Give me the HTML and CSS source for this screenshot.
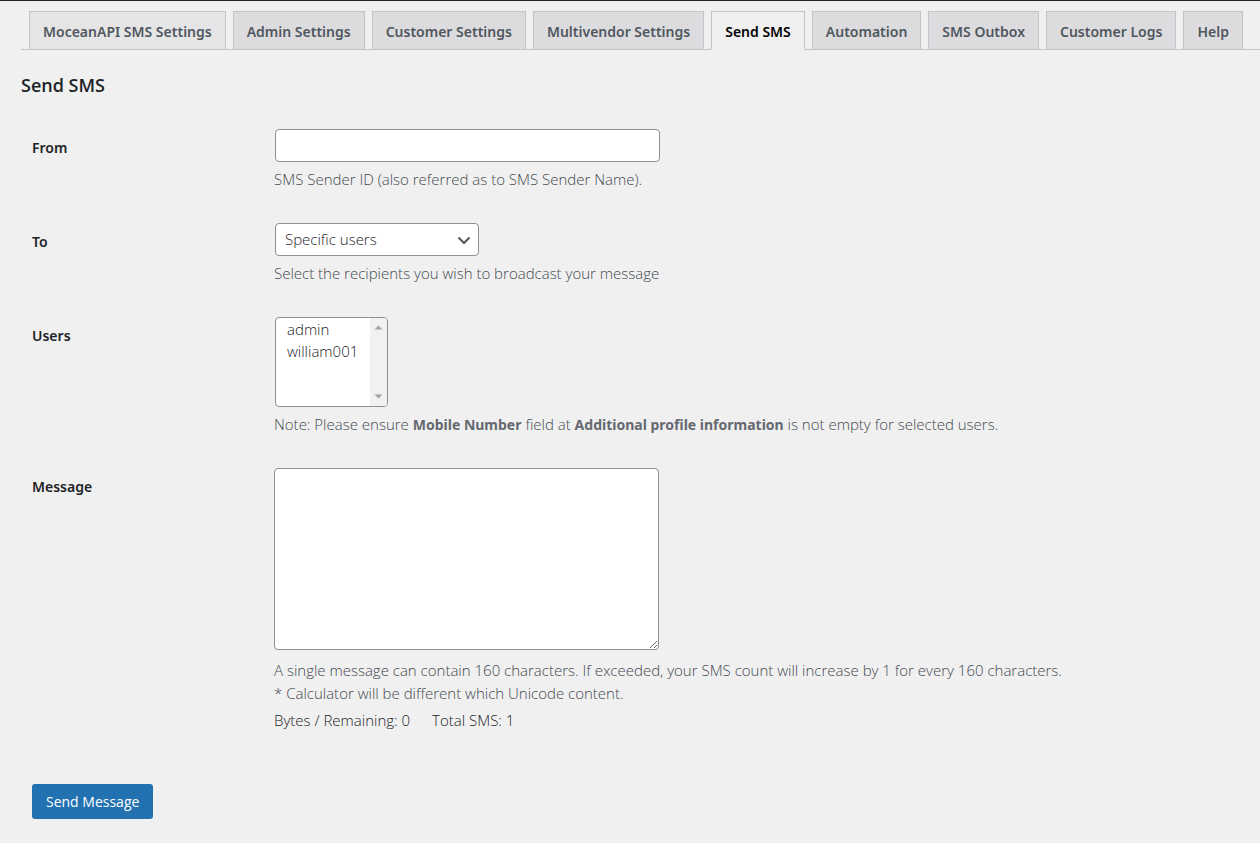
FILE: index.html
```
<!DOCTYPE html>
<html lang="en">
<head>
  <meta charset="UTF-8">
  <meta name="viewport" content="width=device-width, initial-scale=1.0">
  <title>Send SMS</title>
  <link rel="stylesheet" href="styles.css">
</head>
<body>

  <div class="wrap">
    <nav class="nav-tabs">
      <a href="#settings" class="nav-tab hover">MoceanAPI SMS Settings</a>
      <a href="#admin" class="nav-tab">Admin Settings</a>
      <a href="#customer" class="nav-tab">Customer Settings</a>
      <a href="#multivendor" class="nav-tab">Multivendor Settings</a>
      <a href="#send" class="nav-tab active">Send SMS</a>
      <a href="#automation" class="nav-tab">Automation</a>
      <a href="#outbox" class="nav-tab">SMS Outbox</a>
      <a href="#logs" class="nav-tab">Customer Logs</a>
      <a href="#help" class="nav-tab">Help</a>
    </nav>

    <h2>Send SMS</h2>

    <form class="sms-form">
      <div class="form-row">
        <label for="from">From</label>
        <div class="field">
          <input type="text" id="from" name="from">
          <p class="description">SMS Sender ID (also referred as to SMS Sender Name).</p>
        </div>
      </div>

      <div class="form-row">
        <label for="to">To</label>
        <div class="field">
          <select id="to" name="to" class="dropdown">
            <option>Specific users</option>
          </select>
          <p class="description">Select the recipients you wish to broadcast your message</p>
        </div>
      </div>

      <div class="form-row">
        <label for="users">Users</label>
        <div class="field">
          <div class="list-box">
            <select id="users" name="users" class="user-list" multiple>
              <option>admin</option>
              <option>william001</option>
            </select>
            <div class="scroll-track" aria-hidden="true">
              <svg width="9" height="5" viewBox="0 0 9 5"><path d="M0.500 4.500 4.500 0.500l4 4z"/></svg>
              <svg width="9" height="5" viewBox="0 0 9 5"><path d="M0.500 0.500 4.500 4.500l4-4z"/></svg>
            </div>
          </div>
          <p class="description">Note: Please ensure <strong>Mobile Number</strong> field at <strong>Additional profile information</strong> is not empty for selected users.</p>
        </div>
      </div>

      <div class="form-row">
        <label for="message">Message</label>
        <div class="field">
          <textarea id="message" name="message"></textarea>
          <p class="description">A single message can contain 160 characters. If exceeded, your SMS count will increase by 1 for every 160 characters.<br>* Calculator will be different which Unicode content.</p>
          <div class="counter">
            <span>Bytes / Remaining: 0</span>
            <span>Total SMS: 1</span>
          </div>
        </div>
      </div>

      <button type="submit">Send Message</button>
    </form>
  </div>

</body>
</html>
```
FILE: styles.css
```
* {
  box-sizing: border-box;
}

body {
  margin: 0;
  border-top: 1px solid #1d2327;
  background-color: #f0f0f0;
  color: #1d2327;
  font-family: "Open Sans", "Noto Sans", sans-serif;
  font-size: 15px;
  font-weight: 300;
  line-height: 23px;
}

.wrap {
  padding: 10px 0 24px 21px;
}

.nav-tabs {
  display: flex;
  gap: 7px;
  padding-left: 8px;
  border-bottom: 1px solid #c3c4c7;
}

.nav-tab {
  height: 39px;
  margin-bottom: -1px;
  padding: 0 13px;
  border: 1px solid #c3c4c7;
  background-color: #dcdcde;
  color: #50575e;
  font-family: "Noto Sans", sans-serif;
  font-size: 14px;
  font-weight: 600;
  line-height: 40px;
  text-decoration: none;
  white-space: nowrap;
}

.nav-tab:hover,
.nav-tab.hover {
  background-color: #e5e5e6;
}

.nav-tab.active {
  border-bottom-color: #f0f0f0;
  background-color: #f0f0f0;
  color: #000;
}

h2 {
  margin: 23px 0 32px;
  font-size: 18px;
  font-weight: 600;
  line-height: 24px;
}

.sms-form {
  display: flex;
  flex-direction: column;
  gap: 32px;
  padding-left: 11px;
}

.form-row {
  display: grid;
  grid-template-columns: 242px 1fr;
}

.form-row label {
  padding-top: 7px;
  font-family: "Noto Sans", sans-serif;
  font-size: 14px;
  font-weight: 600;
}

input,
select,
textarea {
  display: block;
  border: 1px solid #8c8f94;
  border-radius: 4px;
  background-color: #fff;
  color: #1d2327;
  font: inherit;
}

input,
select {
  height: 33px;
  margin: 0 1px;
}

input {
  width: 385px;
  padding: 0 8px;
}

.dropdown {
  width: 204px;
  padding: 0 24px 0 9px;
  appearance: none;
  background: #fff url('data:image/svg+xml,<svg xmlns="http://www.w3.org/2000/svg" viewBox="0 0 16 16"><path d="M2.5 5.5 8 11l5.500-5.500" fill="none" stroke="%2350575e" stroke-width="2"/></svg>') no-repeat right 6px center;
  background-size: 16px 16px;
}

.list-box {
  position: relative;
  width: 115px;
}

.user-list {
  width: 113px;
  height: 90px;
  padding: 1px 0;
}

.user-list option {
  min-height: 22px;
  padding: 0 11px;
  font-weight: 300;
  line-height: 22px;
}

.scroll-track {
  position: absolute;
  top: 1px;
  right: 2px;
  bottom: 1px;
  display: flex;
  flex-direction: column;
  align-items: center;
  justify-content: space-between;
  width: 17px;
  padding: 7px 0;
  border-radius: 0 3px 3px 0;
  background-color: #f1f1f1;
  fill: #a3a3a3;
}

textarea {
  width: 385px;
  height: 182px;
  padding: 2px 6px;
}

.description {
  margin: 6px 0 0;
  color: #434a51;
}

.description strong {
  color: #646970;
  font-family: "Noto Sans", sans-serif;
  font-size: 14px;
  font-weight: 700;
}

textarea + .description {
  margin-top: 9px;
}

.counter {
  display: flex;
  gap: 22px;
  margin-top: 4px;
}

button {
  align-self: flex-start;
  height: 35px;
  margin-top: 20px;
  padding: 0 14px;
  border: none;
  border-radius: 3px;
  background-color: #2271b1;
  color: #fff;
  font-family: inherit;
  font-size: 14px;
  font-weight: 400;
  cursor: pointer;
}
```
